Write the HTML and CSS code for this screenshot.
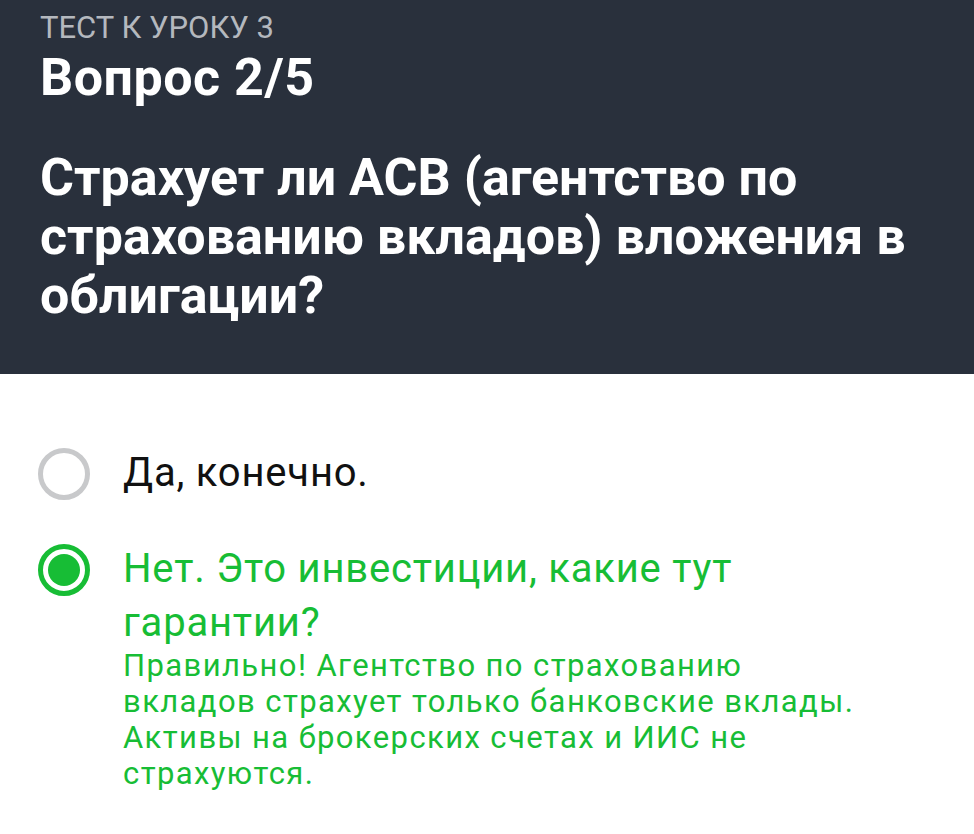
FILE: index.html
```html
<!DOCTYPE html>
<html lang="ru">
<head>
<meta charset="utf-8">
<link rel="stylesheet" href="styles.css">
</head>
<body>
<header class="head">
  <div class="kicker">ТЕСТ К УРОКУ 3</div>
  <div class="counter">Вопрос 2/5</div>
  <h1 class="question">Страхует ли АСВ (агентство по страхованию вкладов) вложения в облигации?</h1>
</header>
<main class="answers">
  <div class="option">
    <span class="radio"></span>
    <div class="text">
      <div class="label">Да, конечно.</div>
    </div>
  </div>
  <div class="option selected">
    <span class="radio"><span class="dot"></span></span>
    <div class="text">
      <div class="label">Нет. Это инвестиции, какие тут гарантии?</div>
      <div class="note">Правильно! Агентство по страхованию вкладов страхует только банковские вклады. Активы на брокерских счетах и ИИС не страхуются.</div>
    </div>
  </div>
</main>
</body>
</html>
```
FILE: styles.css
```css
html, body { margin: 0; padding: 0; }
body {
  font-family: Roboto, "Noto Sans", sans-serif;
  background: #ffffff;
  width: 974px;
  overflow: hidden;
}
.head {
  background: #29303c;
  padding: 10px 40px 30px 40px;
  height: 334px;
  box-sizing: content-box;
}
.kicker {
  color: #b4b8be;
  font-size: 31px;
  line-height: 36px;
}
.counter {
  color: #ffffff;
  font-weight: 700;
  font-size: 52px;
  line-height: 60px;
  letter-spacing: 0.5px;
  margin-top: 2px;
}
.question {
  color: #ffffff;
  font-weight: 700;
  font-size: 52px;
  line-height: 59px;
  margin: 40px 0 0 0;
}
.answers {
  padding: 74px 40px 0 38px;
  display: flex;
  flex-direction: column;
  gap: 44px;
}
.option {
  display: flex;
  align-items: flex-start;
  gap: 33px;
}
.text {
  width: 760px;
}
.radio {
  flex: none;
  width: 52px;
  height: 52px;
  box-sizing: border-box;
  border: 5px solid #c8c9cb;
  border-radius: 50%;
  display: flex;
  align-items: center;
  justify-content: center;
}
.selected .radio { border-color: #17bd35; }
.dot {
  width: 32px;
  height: 32px;
  border-radius: 50%;
  background: #17bd35;
}
.label {
  font-size: 40px;
  line-height: 54px;
  letter-spacing: 0.8px;
  color: #111111;
  margin-top: -2px;
}
.selected .label { color: #17bd35; }
.note {
  color: #17bd35;
  font-size: 31px;
  line-height: 36px;
  letter-spacing: 1.4px;
  margin-top: -2px;
}
```
